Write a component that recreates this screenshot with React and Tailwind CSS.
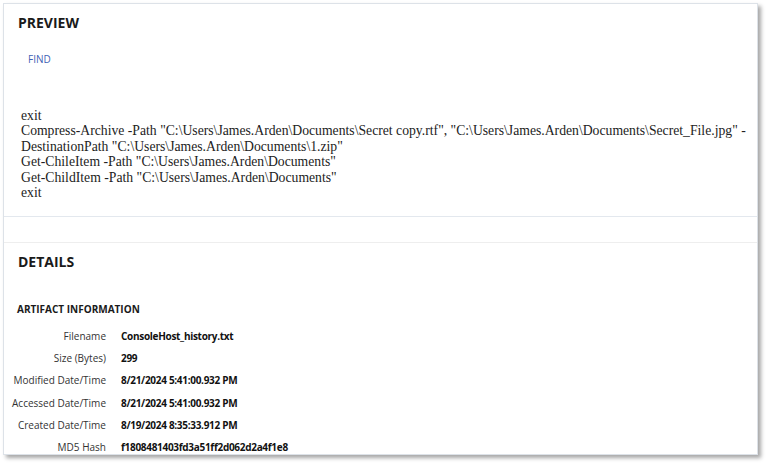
import React from "react";

const rows = [
    ["Filename", "ConsoleHost_history.txt"],
    ["Size (Bytes)", "299"],
    ["Modified Date/Time", "8/21/2024 5:41:00.932 PM"],
    ["Accessed Date/Time", "8/21/2024 5:41:00.932 PM"],
    ["Created Date/Time", "8/19/2024 8:35:33.912 PM"],
    ["MD5 Hash", "f1808481403fd3a51ff2d062d2a4f1e8"],
];

const lines = [
    "exit",
    'Compress-Archive -Path "C:\\Users\\James.Arden\\Documents\\Secret copy.rtf", "C:\\Users\\James.Arden\\Documents\\Secret_File.jpg" -',
    'DestinationPath "C:\\Users\\James.Arden\\Documents\\1.zip"',
    'Get-ChileItem -Path "C:\\Users\\James.Arden\\Documents"',
    'Get-ChildItem -Path "C:\\Users\\James.Arden\\Documents"',
    "exit",
];

function App() {
    return (
        <div className="w-[768px] h-[465px] bg-white pl-[3px] pt-[3px]">
            <div className="w-[755px] h-[452px] bg-white border border-[#dde2e8] shadow-[3px_3px_4px_rgba(0,0,0,0.35)] overflow-hidden font-['Open_Sans',sans-serif]">
                <section className="h-[213px] border-b border-[#e3e8ee] pl-[14px] pt-[10px]">
                    <h2 className="text-[14px] font-bold text-[#1a1a1a] leading-[18px]">PREVIEW</h2>
                    <div className="mt-[20px] ml-[10px] text-[10px] text-[#3f63b5] leading-[14px]">FIND</div>
                    <div className="mt-[42px] ml-[3px] font-['Liberation_Serif',serif] text-[13.7px] leading-[15.4px] text-[#222]">
                        {lines.map((l, i) => (
                            <div key={i} className="whitespace-nowrap">{l}</div>
                        ))}
                    </div>
                </section>
                <div className="h-[25px]"></div>
                <section className="border-t border-[#eeeeee] pl-[14px] pt-[10px]">
                    <h2 className="text-[14px] font-bold text-[#1a1a1a] leading-[18px]">DETAILS</h2>
                    <h3 className="mt-[31px] -ml-[1px] text-[10px] font-bold text-[#1a1a1a] leading-[14px]">ARTIFACT INFORMATION</h3>
                    <div className="mt-[9px] -ml-[11px]">
                        {rows.map(([k, v]) => (
                            <div key={k} className="flex items-center h-[22.3px] text-[10px]">
                                <span className="w-[99px] text-right text-[#333]">{k}</span>
                                <span className="ml-[15px] font-bold tracking-[-0.3px] text-[#111]">{v}</span>
                            </div>
                        ))}
                    </div>
                </section>
            </div>
        </div>
    );
}

export default App;
